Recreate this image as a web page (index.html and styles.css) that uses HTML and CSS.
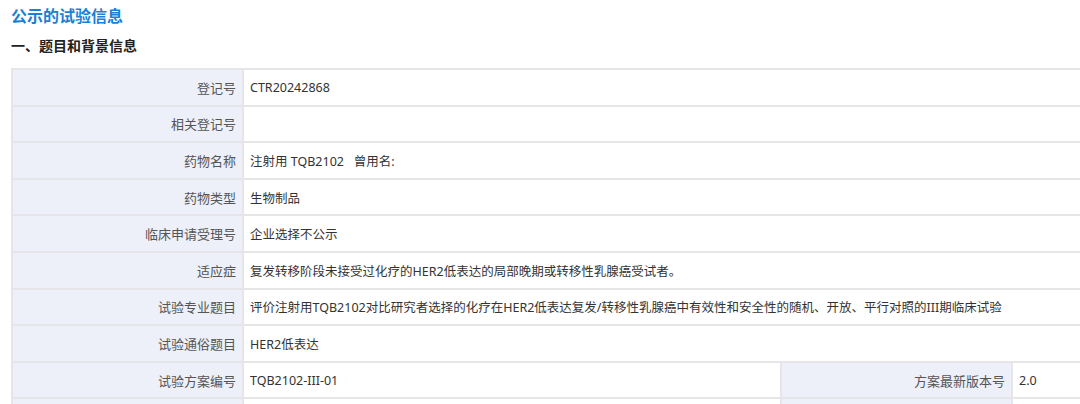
FILE: index.html
```html
<!DOCTYPE html>
<html lang="zh-CN">
<head>
  <meta charset="UTF-8">
  <meta name="viewport" content="width=device-width, initial-scale=1.0">
  <title>公示的试验信息</title>
  <link rel="stylesheet" href="styles.css">
</head>
<body>
  <div class="page">
    <h1 class="page-title">公示的试验信息</h1>
    <h2 class="section-title">一、题目和背景信息</h2>

    <table class="info-table">
      <colgroup>
        <col class="col-label">
        <col class="col-value">
        <col class="col-label">
        <col class="col-value2">
      </colgroup>
      <tr>
        <th>登记号</th>
        <td colspan="3">CTR20242868</td>
      </tr>
      <tr>
        <th>相关登记号</th>
        <td colspan="3"></td>
      </tr>
      <tr>
        <th>药物名称</th>
        <td colspan="3">注射用 TQB2102&nbsp;&nbsp;&nbsp;曾用名:</td>
      </tr>
      <tr>
        <th>药物类型</th>
        <td colspan="3">生物制品</td>
      </tr>
      <tr>
        <th>临床申请受理号</th>
        <td colspan="3">企业选择不公示</td>
      </tr>
      <tr>
        <th>适应症</th>
        <td colspan="3">复发转移阶段未接受过化疗的HER2低表达的局部晚期或转移性乳腺癌受试者。</td>
      </tr>
      <tr>
        <th>试验专业题目</th>
        <td colspan="3">评价注射用TQB2102对比研究者选择的化疗在HER2低表达复发/转移性乳腺癌中有效性和安全性的随机、开放、平行对照的III期临床试验</td>
      </tr>
      <tr>
        <th>试验通俗题目</th>
        <td colspan="3">HER2低表达</td>
      </tr>
      <tr>
        <th>试验方案编号</th>
        <td>TQB2102-III-01</td>
        <th>方案最新版本号</th>
        <td>2.0</td>
      </tr>
      <!-- next row only peeks in at the bottom edge -->
      <tr>
        <th></th>
        <td></td>
        <th></th>
        <td></td>
      </tr>
    </table>
  </div>
</body>
</html>
```

FILE: styles.css
```css
html, body {
  overflow: hidden;
}

body {
  margin: 0;
  font-family: "Noto Sans", "Noto Sans CJK SC", sans-serif;
  font-size: 13px;
  color: #333333;
  background-color: #ffffff;
}

.page {
  padding: 4px 0 0 11px;
}

.page-title {
  margin: 0;
  font-size: 16px;
  font-weight: 700;
  line-height: 24px;
  color: #1c7fd6;
}

.section-title {
  margin: 7px 0 0;
  font-size: 14px;
  font-weight: 700;
  line-height: 22px;
  color: #222222;
}

.info-table {
  margin-top: 11px;
  width: 1100px;
  table-layout: fixed;
  border-collapse: collapse;
  border-left: 2px solid #e6e6e8;
  border-top: 2px solid #e6e6e8;
}

.col-label {
  width: 231px;
}

.col-value {
  width: 538px;
}

.col-value2 {
  width: 99px;
}

.info-table th,
.info-table td {
  height: 34.6px;
  padding: 0 6px;
  border-bottom: 2px solid #e6e6e8;
  border-right: 2px solid #e6e6e8;
  white-space: nowrap;
  overflow: hidden;
}

.info-table th {
  text-align: right;
  font-weight: 400;
  color: #555555;
  background-color: #edf0f9;
}

.info-table td {
  text-align: left;
  font-size: 12.5px;
  color: #333333;
}
```
